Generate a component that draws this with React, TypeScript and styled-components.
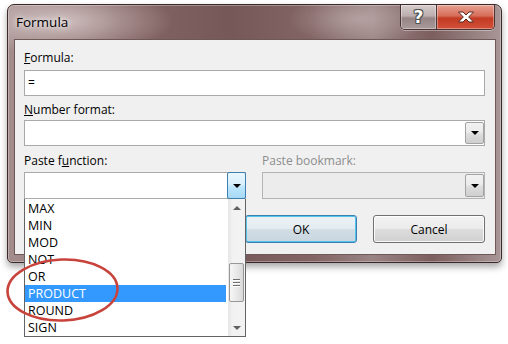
import React from 'react';
import styled, { createGlobalStyle } from 'styled-components';

const GlobalStyle = createGlobalStyle`
  html, body {
    margin: 0;
    padding: 0;
    background: #fff;
  }
  body {
    font-family: "Open Sans", "Liberation Sans", sans-serif;
    font-size: 12px;
    color: #000;
  }
`;

const Page = styled.div`
  position: relative;
  width: 508px;
  height: 344px;
  padding: 4px 0 0 7px;
  box-sizing: border-box;
  overflow: hidden;
`;

const Window = styled.div`
  position: relative;
  width: 495px;
  height: 259px;
  box-sizing: border-box;
  display: flex;
  flex-direction: column;
  padding: 0 5px 7px 6px;
  border: 1px solid #3b2929;
  border-radius: 7px 7px 5px 5px;
  background:
    radial-gradient(ellipse 110px 34px at 55px 16px, rgba(225, 212, 212, 0.75), transparent),
    radial-gradient(ellipse 70px 26px at 350px 14px, rgba(205, 190, 190, 0.55), transparent),
    linear-gradient(90deg, #a48d8d 0%, #866767 22%, #775858 45%, #836565 62%, #9a8383 74%, #7c5e5e 86%, #a89696 100%);
  box-shadow: 0 4px 7px rgba(0, 0, 0, 0.35), inset 0 0 0 1px rgba(255, 255, 255, 0.3);
`;

const TitleBar = styled.div`
  height: 34px;
  display: flex;
  align-items: center;
  padding-left: 2px;
`;

const Title = styled.span`
  font-family: "Open Sans", sans-serif;
  font-size: 13.5px;
  color: #000;
  text-shadow: 0 0 8px #fff, 0 0 5px rgba(255, 255, 255, 0.8);
`;

const CaptionGroup = styled.div`
  display: flex;
  align-self: flex-start;
  margin-left: auto;
  margin-right: 1px;
  height: 24px;
  border: 1px solid #4a3434;
  border-top: none;
  border-radius: 0 0 5px 5px;
  overflow: hidden;
  box-shadow: 0 1px 0 rgba(255, 255, 255, 0.35);
`;

const CaptionButton = styled.div<{ $close?: boolean }>`
  width: ${(p) => (p.$close ? '57px' : '35px')};
  display: flex;
  align-items: center;
  justify-content: center;
  border-left: ${(p) => (p.$close ? '1px solid #4a3434' : 'none')};
  background: ${(p) =>
    p.$close
      ? 'linear-gradient(#e7a193 0%, #d66d58 45%, #c33b23 55%, #d2503a 100%)'
      : 'linear-gradient(#d6cdcd 0%, #bcaeae 45%, #978585 55%, #ab9a9a 100%)'};
  box-shadow: inset 0 0 0 1px rgba(255, 255, 255, 0.35);
`;

const HelpGlyph = styled.span`
  font-family: "DejaVu Sans", sans-serif;
  font-weight: bold;
  font-size: 17px;
  line-height: 1;
  color: #fff;
  text-shadow: 0 0 1px #333, 1px 1px 0 #555, -1px -1px 0 #555, 1px -1px 0 #555, -1px 1px 0 #555;
`;

const Client = styled.div`
  flex: 1;
  display: flex;
  flex-direction: column;
  background: #f0f0f0;
  border: 1px solid #6e5858;
  padding: 10px 10px 11px 9px;
`;

const Label = styled.div<{ $disabled?: boolean }>`
  height: 16px;
  line-height: 16px;
  color: ${(p) => (p.$disabled ? '#8d8d8d' : '#000')};
  white-space: nowrap;
`;

const Field = styled.div<{ $top: number; $gap: number }>`
  display: flex;
  flex-direction: column;
  gap: ${(p) => p.$gap}px;
  margin-top: ${(p) => p.$top}px;
  position: relative;
`;

const TextBox = styled.div`
  height: 26px;
  box-sizing: border-box;
  border: 1px solid #a9a9a9;
  background: #fff;
  padding: 0 3px;
  line-height: 24px;
`;

const Select = styled.div<{ $disabled?: boolean; $height?: number }>`
  height: ${(p) => p.$height ?? 26}px;
  box-sizing: border-box;
  display: flex;
  align-items: stretch;
  justify-content: flex-end;
  border: 1px solid ${(p) => (p.$disabled ? '#b4b4b4' : '#a9a9a9')};
  background: ${(p) => (p.$disabled ? '#ececec' : '#fff')};
`;

const DropButton = styled.div<{ $hot?: boolean }>`
  width: 19px;
  display: flex;
  align-items: center;
  justify-content: center;
  box-sizing: border-box;
  margin: ${(p) => (p.$hot ? '-1px -1px -1px 0' : '1px 0 1px 0')};
  border: 1px solid ${(p) => (p.$hot ? '#3c7fb1' : '#a3a3a3')};
  border-radius: 2px;
  background: ${(p) =>
    p.$hot
      ? 'linear-gradient(#eaf6fd 0%, #d9f0fc 45%, #bee6fd 55%, #a7d9f5 100%)'
      : 'linear-gradient(#f2f2f2 0%, #ebebeb 45%, #dddddd 55%, #cfcfcf 100%)'};
`;

const DownArrow = styled.span`
  width: 0;
  height: 0;
  border-left: 4px solid transparent;
  border-right: 4px solid transparent;
  border-top: 4px solid #000;
`;

const Columns = styled.div`
  display: grid;
  grid-template-columns: 222px 223px;
  column-gap: 16px;
  margin-top: 7px;
`;

const Buttons = styled.div`
  display: flex;
  justify-content: flex-end;
  gap: 16px;
  margin-top: 16px;
`;

const Button = styled.div<{ $default?: boolean }>`
  width: 112px;
  height: 28px;
  box-sizing: border-box;
  display: flex;
  align-items: center;
  justify-content: center;
  border: 1px solid ${(p) => (p.$default ? '#3c7fb1' : '#707070')};
  border-radius: 3px;
  background: ${(p) =>
    p.$default
      ? 'linear-gradient(#ecf3f7 0%, #e3ecf1 48%, #d2dee6 52%, #c8d5de 100%)'
      : 'linear-gradient(#f3f3f3 0%, #ebebeb 48%, #dddddd 52%, #d0d0d0 100%)'};
  box-shadow: inset 0 0 0 1px ${(p) => (p.$default ? '#55c2ee' : 'rgba(255,255,255,0.85)')};
`;

const DropList = styled.div`
  position: absolute;
  top: 100%;
  left: 0;
  z-index: 3;
  width: 222px;
  height: 138px;
  box-sizing: border-box;
  display: flex;
  background: #fff;
  border: 1px solid #646464;
  border-top: none;
`;

const Items = styled.div`
  flex: 1;
  padding-top: 1px;
  margin-right: 2px;
`;

const Item = styled.div<{ $selected?: boolean }>`
  height: 17px;
  line-height: 17px;
  padding-left: 3px;
  font-size: 12.5px;
  background: ${(p) => (p.$selected ? '#3399ff' : 'transparent')};
  color: ${(p) => (p.$selected ? '#fff' : '#000')};
`;

const ScrollBar = styled.div`
  width: 17px;
  display: flex;
  flex-direction: column;
  background: linear-gradient(90deg, #e6e6e6, #f2f2f2 30%, #f2f2f2);
`;

const ScrollArrow = styled.div`
  height: 17px;
  display: flex;
  align-items: center;
  justify-content: center;
`;

const ArrowGlyph = styled.span<{ $up?: boolean }>`
  width: 0;
  height: 0;
  border-left: 4px solid transparent;
  border-right: 4px solid transparent;
  ${(p) => (p.$up ? 'border-bottom: 4px solid #606060;' : 'border-top: 4px solid #606060;')}
`;

const Track = styled.div`
  flex: 1;
`;

const Thumb = styled.div`
  height: 39px;
  box-sizing: border-box;
  margin: 0 1px;
  display: flex;
  flex-direction: column;
  align-items: center;
  justify-content: center;
  gap: 2px;
  border: 1px solid #979797;
  border-radius: 2px;
  background: linear-gradient(90deg, #f6f6f6, #e9e9e9 50%, #d9d9d9);
`;

const Grip = styled.span`
  width: 7px;
  height: 1px;
  background: #6f6f6f;
  box-shadow: 0 1px 0 #fff;
`;

const Annotation = styled.svg`
  position: absolute;
  left: 0;
  top: 0;
  z-index: 5;
  pointer-events: none;
`;

const functions = ['MAX', 'MIN', 'MOD', 'NOT', 'OR', 'PRODUCT', 'ROUND', 'SIGN'];

export default function App() {
  const thumbOffset = 47;
  return (
    <>
      <GlobalStyle />
      <Page>
        <Window>
          <TitleBar>
            <Title>Formula</Title>
            <CaptionGroup>
              <CaptionButton>
                <HelpGlyph>?</HelpGlyph>
              </CaptionButton>
              <CaptionButton $close>
                <svg width="18" height="12" viewBox="0 0 18 12">
                  <path
                    d="M1.5 1 L6 1 L9 4 L12 1 L16.5 1 L11.7 6 L16.5 11 L12 11 L9 8 L6 11 L1.5 11 L6.3 6 Z"
                    fill="#fff"
                    stroke="#5a2a22"
                    strokeWidth="1"
                    strokeLinejoin="round"
                  />
                </svg>
              </CaptionButton>
            </CaptionGroup>
          </TitleBar>
          <Client>
            <Field $top={0} $gap={4}>
              <Label>
                <u>F</u>ormula:
              </Label>
              <TextBox>=</TextBox>
            </Field>
            <Field $top={6} $gap={2}>
              <Label>
                <u>N</u>umber format:
              </Label>
              <Select>
                <DropButton>
                  <DownArrow />
                </DropButton>
              </Select>
            </Field>
            <Columns>
              <Field $top={0} $gap={3}>
                <Label>
                  Paste f<u>u</u>nction:
                </Label>
                <Select $height={27}>
                  <DropButton $hot>
                    <DownArrow />
                  </DropButton>
                </Select>
                <DropList>
                  <Items>
                    {functions.map((f) => (
                      <Item key={f} $selected={f === 'PRODUCT'}>
                        {f}
                      </Item>
                    ))}
                  </Items>
                  <ScrollBar>
                    <ScrollArrow>
                      <ArrowGlyph $up />
                    </ScrollArrow>
                    <Track>
                      <Thumb style={{ marginTop: thumbOffset }}>
                        <Grip />
                        <Grip />
                        <Grip />
                      </Thumb>
                    </Track>
                    <ScrollArrow>
                      <ArrowGlyph />
                    </ScrollArrow>
                  </ScrollBar>
                </DropList>
              </Field>
              <Field $top={0} $gap={3}>
                <Label $disabled>Paste bookmark:</Label>
                <Select $disabled $height={27}>
                  <DropButton>
                    <DownArrow />
                  </DropButton>
                </Select>
              </Field>
            </Columns>
            <Buttons>
              <Button $default>OK</Button>
              <Button>Cancel</Button>
            </Buttons>
          </Client>
        </Window>
        <Annotation width="508" height="344" viewBox="0 0 508 344">
          <ellipse
            cx="62.5"
            cy="290"
            rx="55"
            ry="30.5"
            fill="none"
            stroke="#c8433b"
            strokeWidth="2.6"
            transform="rotate(-2 62.5 290)"
          />
        </Annotation>
      </Page>
    </>
  );
}
